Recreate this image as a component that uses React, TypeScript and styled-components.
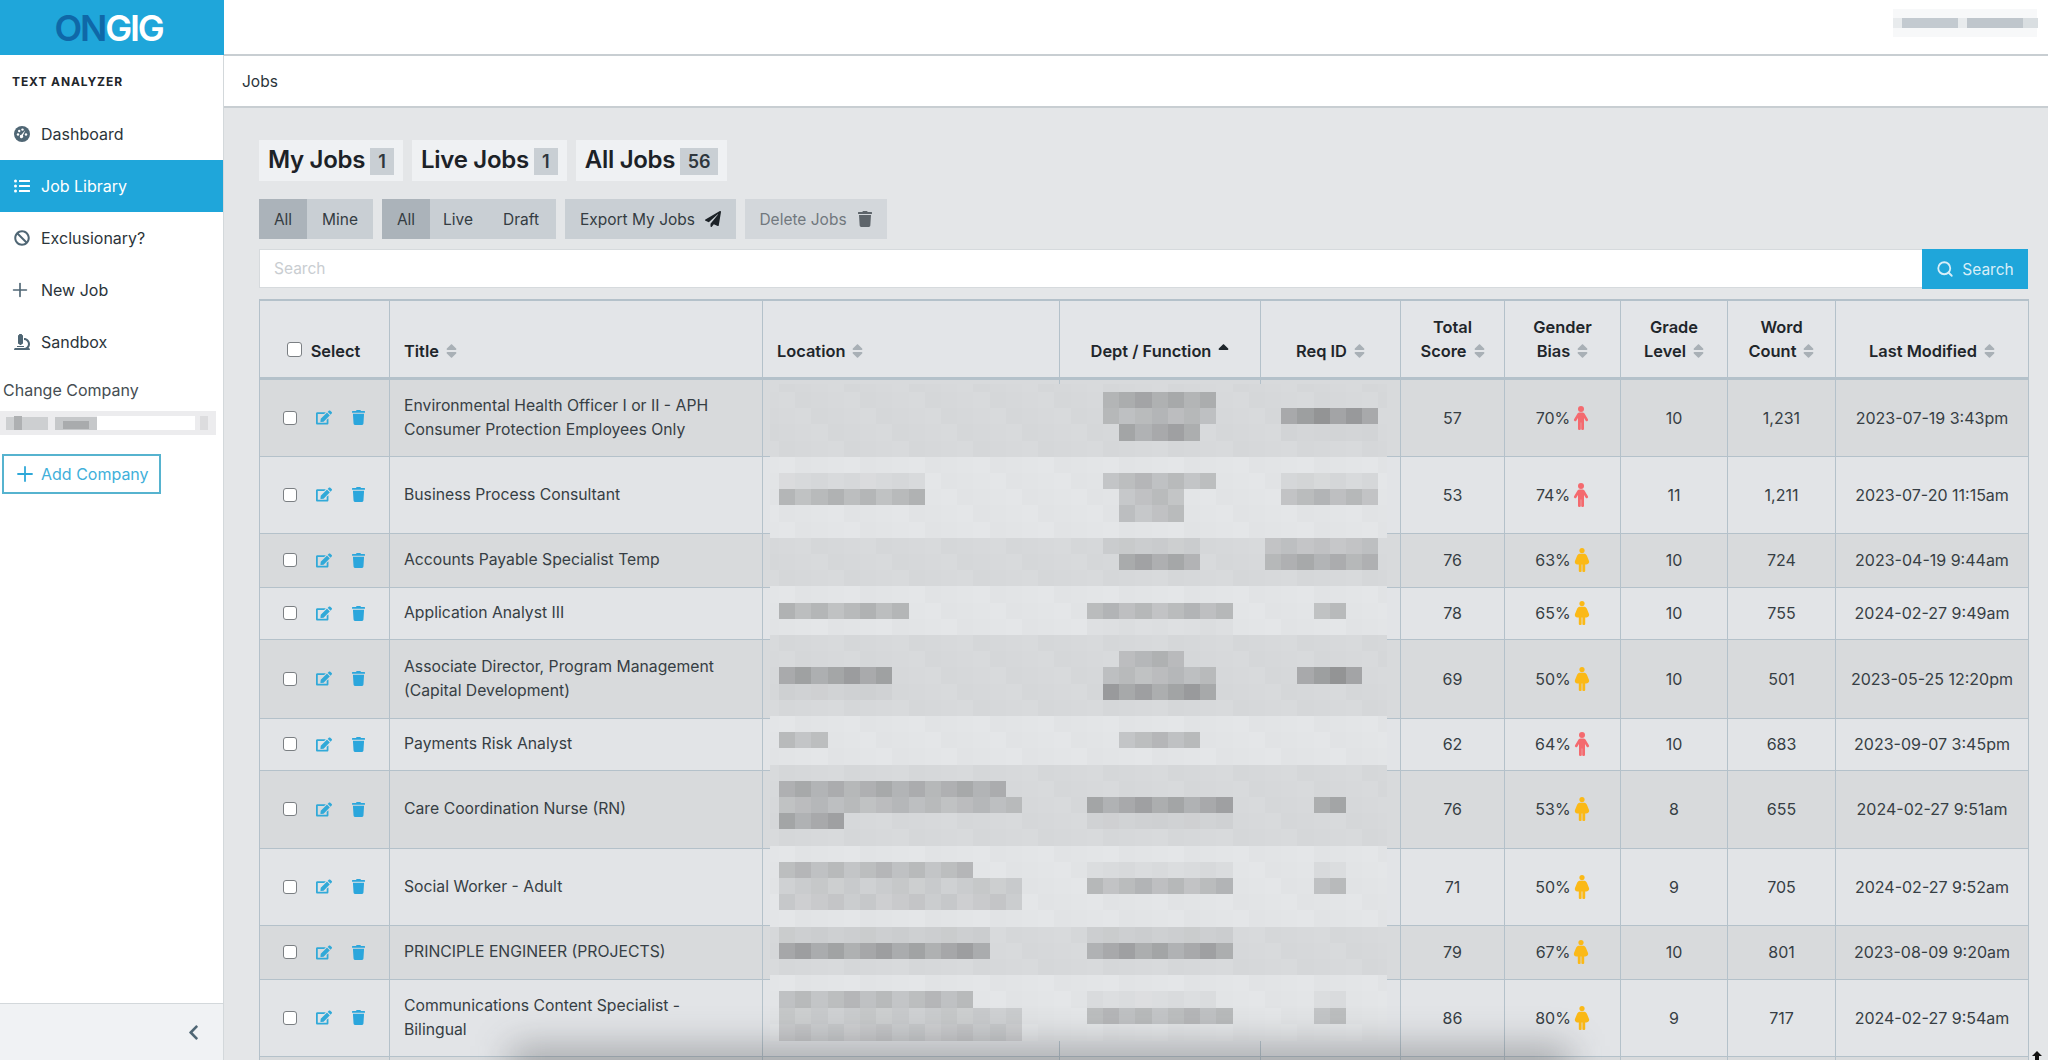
import React from "react";
import styled, { createGlobalStyle } from "styled-components";
import {
  FaBan,
  FaChevronLeft,
  FaEdit,
  FaListUl,
  FaMicroscope,
  FaPaperPlane,
  FaSort,
  FaSortUp,
  FaTrash,
} from "react-icons/fa";
import { Plus, Search } from "lucide-react";

const GlobalStyle = createGlobalStyle`
  html, body {
    margin: 0;
    padding: 0;
    background: #e4e6e8;
  }
  body {
    font-family: Inter, "Noto Sans", "Liberation Sans", sans-serif;
    color: #2f373d;
  }
  * { box-sizing: border-box; }
`;

const Page = styled.div`
  position: relative;
  display: grid;
  grid-template-columns: 224px 1fr;
  width: 2048px;
  height: 1060px;
  overflow: hidden;
`;

const Sidebar = styled.aside`
  display: flex;
  flex-direction: column;
  background: #fff;
  border-right: 1px solid #d3d8db;
  height: 1060px;
`;

const LogoBar = styled.div`
  height: 55px;
  margin-right: -1px;
  background: #1fa6da;
  display: flex;
  align-items: center;
  justify-content: center;
  font-size: 36px;
  font-weight: 600;
  letter-spacing: -2.2px;
  color: #fff;
  padding-right: 7px;
`;

const LogoDark = styled.span`
  color: #0f68a8;
`;

const SideTitle = styled.div`
  height: 53px;
  padding: 0 12px;
  display: flex;
  align-items: center;
  font-size: 12px;
  font-weight: 700;
  letter-spacing: 0.9px;
  color: #1f262b;
`;

const MenuItem = styled.div<{ $active?: boolean }>`
  height: 52px;
  padding-left: 14px;
  display: flex;
  align-items: center;
  gap: 11px;
  font-size: 16px;
  color: ${(p) => (p.$active ? "#fff" : "#2b343a")};
  background: ${(p) => (p.$active ? "#1fa6da" : "transparent")};

  svg {
    width: 16px;
    height: 16px;
    color: ${(p) => (p.$active ? "#fff" : "#4f6674")};
  }
`;

const MenuPlus = styled(Plus)`
  && {
    width: 22px;
    height: 22px;
    margin: 0 -1px 0 -5px;
  }
`;

const CompanyLabel = styled.div`
  padding: 11px 0 0 3px;
  height: 34px;
  font-size: 16px;
  line-height: 22px;
  color: #454d52;
`;

const CompanyBlur = styled.div`
  margin-top: 9px;
  height: 24px;
  width: 216px;

  svg {
    display: block;
  }
`;

const AddCompany = styled.div`
  margin: 19px 0 0 2px;
  width: 159px;
  height: 40px;
  border: 2px solid #56b3cf;
  display: flex;
  align-items: center;
  gap: 7px;
  padding-left: 12px;
  font-size: 16px;
  color: #3fb0da;

  svg {
    width: 24px;
    height: 24px;
    margin: 0 -3px;
    color: #2ea8d8;
  }
`;

const SideFooter = styled.div`
  margin-top: auto;
  height: 57px;
  background: #f0f2f4;
  border-top: 1px solid #d3d8db;
  display: flex;
  align-items: center;
  justify-content: flex-end;
  padding-right: 22px;
  color: #4f6674;

  svg {
    width: 15px;
    height: 17px;
  }
`;

const Main = styled.main`
  display: flex;
  flex-direction: column;
  min-width: 0;
`;

const TopBar = styled.header`
  height: 56px;
  margin-bottom: -2px;
  flex: none;
  background: #fff;
  border-bottom: 2px solid #c8ced2;
  display: flex;
  justify-content: flex-end;
  align-items: flex-start;
  padding: 9px 8px 0 0;

  svg {
    display: block;
  }
`;

const Crumbs = styled.div`
  height: 54px;
  flex: none;
  background: #fff;
  border-top: 2px solid #c8ced2;
  border-bottom: 2px solid #c8ced2;
  padding-left: 18px;
  display: flex;
  align-items: center;
  font-size: 15.5px;
  color: #2b343a;
`;

const Content = styled.div`
  flex: 1;
  padding: 32px 20px 0 35px;
  min-height: 0;
`;

const Tabs = styled.div`
  display: flex;
  gap: 9px;
  height: 41px;
`;

const Tab = styled.div`
  height: 41px;
  padding: 0 9px 2px 9px;
  background: #eff1f3;
  display: flex;
  align-items: center;
  gap: 5px;
  font-size: 24px;
  font-weight: 600;
  letter-spacing: -0.3px;
  color: #1c2227;
`;

const Badge = styled.span<{ $w: number }>`
  width: ${(p) => p.$w}px;
  height: 27px;
  margin-top: 3px;
  background: #c9cfd4;
  display: flex;
  align-items: center;
  justify-content: center;
  font-size: 18px;
  font-weight: 600;
  letter-spacing: 0;
  color: #2f373d;
`;

const Toolbar = styled.div`
  display: flex;
  gap: 9px;
  margin-top: 18px;
  height: 40px;
`;

const Group = styled.div`
  display: flex;
`;

const Btn = styled.div<{ $active?: boolean; $w: number; $off?: boolean }>`
  height: 40px;
  width: ${(p) => p.$w}px;
  display: flex;
  align-items: center;
  justify-content: center;
  gap: 10px;
  font-size: 15.5px;
  background: ${(p) => (p.$active ? "#abb3ba" : p.$off ? "#d3d7db" : "#c9cfd4")};
  color: ${(p) => (p.$off ? "#71787e" : "#343c42")};

  svg {
    width: 16px;
    height: 16px;
    color: ${(p) => (p.$off ? "#5e656b" : "#1c2227")};
  }
`;

const SearchRow = styled.div`
  display: flex;
  margin-top: 10px;
  height: 40px;
`;

const SearchInput = styled.input`
  flex: 1;
  height: 39px;
  border: 1px solid #d6dadd;
  border-right: none;
  background: #fff;
  padding: 0 14px;
  font-family: inherit;
  font-size: 15.5px;
  outline: none;

  &::placeholder {
    color: #c9cdd1;
  }
`;

const SearchBtn = styled.div`
  width: 106px;
  height: 40px;
  background: #1fa6da;
  color: #d8eef8;
  display: flex;
  align-items: center;
  justify-content: center;
  gap: 8px;
  font-size: 15.5px;

  svg {
    width: 18px;
    height: 18px;
  }
`;

const TableWrap = styled.div`
  position: relative;
  margin-top: 10px;
`;

const Table = styled.table`
  width: 1769px;
  table-layout: fixed;
  border-collapse: collapse;
`;

const Th = styled.th<{ $left?: boolean }>`
  height: 78px;
  padding: 0 14px 14px;
  vertical-align: bottom;
  text-align: ${(p) => (p.$left ? "left" : "center")};
  font-size: 16.4px;
  font-weight: 600;
  line-height: 24px;
  color: #1f262b;
  background: #e3e5e8;
  border: 1px solid #b4c1ca;
  border-top-width: 2px;
  border-bottom: 3px solid #b4c1ca;
  white-space: nowrap;
`;

const SortIcon = styled(FaSort)`
  width: 11px;
  height: 18px;
  margin-left: 7px;
  vertical-align: -3px;
  color: #a9b0b6;
`;

const SortUp = styled(FaSortUp)`
  width: 11px;
  height: 18px;
  margin-left: 7px;
  vertical-align: -3px;
  color: #1f262b;
`;

const Row = styled.tr<{ $dark: boolean }>`
  background: ${(p) => (p.$dark ? "#d8dadc" : "#e2e4e7")};
`;

const Td = styled.td<{ $h: number; $left?: boolean }>`
  height: ${(p) => p.$h}px;
  padding: 0 ${(p) => (p.$left ? "14px" : "0")};
  text-align: ${(p) => (p.$left ? "left" : "center")};
  font-size: ${(p) => (p.$left ? "15.75px" : "16px")};
  line-height: 24px;
  color: #363e44;
  border: 1px solid #b4c1ca;
  white-space: pre-line;
`;

const Check = styled.input.attrs({ type: "checkbox" })`
  appearance: none;
  flex: none;
  width: 14px;
  height: 14px;
  margin: 0;
  background: #fff;
  border: 1px solid #7b7f83;
  border-radius: 3px;
`;

const HeadCheck = styled(Check)`
  width: 15px;
  height: 15px;
  position: relative;
  top: -1px;
`;

const Actions = styled.div`
  display: flex;
  align-items: center;
  padding-left: 23px;
`;

const EditIcon = styled(FaEdit)`
  width: 16px;
  height: 15px;
  margin-left: 19px;
  color: #31a9d8;
`;

const TrashIcon = styled(FaTrash)`
  width: 13px;
  height: 15px;
  margin-left: 20px;
  color: #2ba6dc;
`;

const SelectHead = styled.div`
  display: flex;
  align-items: center;
  justify-content: center;
  gap: 9px;
  padding-right: 2px;
`;

const Bias = styled.span`
  display: inline-flex;
  align-items: center;
  justify-content: center;
  gap: 3px;
`;

const PersonIcon = styled.svg<{ $c: string }>`
  width: 16px;
  height: 24px;
  fill: ${(p) => p.$c};

  line {
    stroke: ${(p) => p.$c};
    stroke-width: 2.6;
    stroke-linecap: round;
  }
`;

const MosaicLayer = styled.svg`
  position: absolute;
  left: 511px;
  top: 85px;
  width: 617px;
  height: 658px;
`;

const DockShadow = styled.div`
  position: absolute;
  left: 510px;
  bottom: -26px;
  width: 1060px;
  height: 40px;
  background: rgba(40, 44, 48, 0.32);
  filter: blur(18px);
  pointer-events: none;
`;

const Cursor = styled.svg`
  position: absolute;
  left: 2032px;
  top: 1051px;
  width: 10px;
  height: 9px;
`;

type Job = {
  title: string;
  h: number;
  score: number;
  bias: number;
  red: boolean;
  grade: number;
  words: string;
  date: string;
};

const jobs: Job[] = [
  { title: "Environmental Health Officer I or II - APH\nConsumer Protection Employees Only", h: 78, score: 57, bias: 70, red: true, grade: 10, words: "1,231", date: "2023-07-19 3:43pm" },
  { title: "Business Process Consultant", h: 77, score: 53, bias: 74, red: true, grade: 11, words: "1,211", date: "2023-07-20 11:15am" },
  { title: "Accounts Payable Specialist Temp", h: 54, score: 76, bias: 63, red: false, grade: 10, words: "724", date: "2023-04-19 9:44am" },
  { title: "Application Analyst III", h: 52, score: 78, bias: 65, red: false, grade: 10, words: "755", date: "2024-02-27 9:49am" },
  { title: "Associate Director, Program Management\n(Capital Development)", h: 79, score: 69, bias: 50, red: false, grade: 10, words: "501", date: "2023-05-25 12:20pm" },
  { title: "Payments Risk Analyst", h: 52, score: 62, bias: 64, red: true, grade: 10, words: "683", date: "2023-09-07 3:45pm" },
  { title: "Care Coordination Nurse (RN)", h: 78, score: 76, bias: 53, red: false, grade: 8, words: "655", date: "2024-02-27 9:51am" },
  { title: "Social Worker - Adult", h: 77, score: 71, bias: 50, red: false, grade: 9, words: "705", date: "2024-02-27 9:52am" },
  { title: "PRINCIPLE ENGINEER (PROJECTS)", h: 54, score: 79, bias: 67, red: false, grade: 10, words: "801", date: "2023-08-09 9:20am" },
  { title: "Communications Content Specialist -\nBilingual", h: 77, score: 86, bias: 80, red: false, grade: 9, words: "717", date: "2024-02-27 9:54am" },
];

// redacted columns: [tile row, first col, last col (exclusive), strength]
const bands: [number, number, number, number][] = [
  [0, 20, 27, 0.26], [1, 20, 27, 0.18], [1, 31, 37, 0.34], [2, 21, 26, 0.28], [2, 31, 37, 0.03],
  [5, 0, 9, 0.07], [5, 20, 27, 0.22], [5, 31, 37, 0.08], [6, 0, 9, 0.24], [6, 21, 25, 0.2], [6, 31, 37, 0.23], [7, 21, 25, 0.2],
  [9, 20, 26, 0.08], [9, 30, 37, 0.13], [10, 21, 26, 0.27], [10, 30, 37, 0.24],
  [13, 0, 8, 0.24], [13, 19, 28, 0.23], [13, 33, 35, 0.24], [14, 19, 28, 0.04],
  [16, 21, 25, 0.2], [17, 0, 7, 0.3], [17, 20, 27, 0.17], [17, 32, 36, 0.34], [18, 0, 7, 0.05], [18, 20, 27, 0.31],
  [21, 0, 3, 0.22], [21, 21, 26, 0.22],
  [24, 0, 14, 0.24], [25, 0, 15, 0.17], [25, 19, 28, 0.28], [25, 33, 35, 0.28], [26, 0, 4, 0.28], [26, 19, 28, 0.05],
  [29, 0, 12, 0.22], [29, 19, 28, 0.06], [29, 33, 35, 0.06], [30, 0, 15, 0.14], [30, 19, 28, 0.23], [30, 33, 35, 0.22], [31, 0, 15, 0.15],
  [33, 0, 13, 0.07], [33, 19, 28, 0.07], [34, 0, 13, 0.29], [34, 19, 28, 0.28],
  [37, 0, 12, 0.22], [37, 19, 27, 0.05], [37, 33, 35, 0.05], [38, 0, 15, 0.14], [38, 19, 28, 0.22], [38, 33, 35, 0.22], [39, 0, 15, 0.15],
];

const lightRows = [4, 5, 6, 7, 8, 12, 13, 14, 20, 21, 22, 28, 29, 30, 31, 32, 36, 37, 38, 39];

function Mosaic() {
  const tile = 16.2;
  const rects: React.ReactElement[] = [];
  for (let j = -1; j < 40; j++) {
    const base = lightRows.includes(j) ? [228, 230, 232] : [216, 218, 220];
    const y = j === -1 ? 0 : 8 + j * tile;
    const ht = j === -1 ? 8 : tile;
    for (let i = -1; i < 38; i++) {
      const x = i === -1 ? 0 : 9 + i * tile;
      const w = i === -1 ? 9 : tile;
      const band = bands.find((b) => b[0] === j && i >= b[1] && i < b[2]);
      const noise = 0.82 + (((i * 7 + j * 13) % 5 + 5) % 5) * 0.09;
      const k = band ? 1 - band[3] * noise * 0.8 : 1 - (((i * 3 + j * 5) % 4 + 4) % 4) * 0.004;
      const c = base.map((v) => Math.round(v * k));
      rects.push(
        <rect key={`${i}-${j}`} x={x} y={y} width={w + 0.5} height={ht + 0.5} fill={`rgb(${c[0]},${c[1]},${c[2]})`} />
      );
    }
  }
  return (
    <MosaicLayer viewBox="0 0 617 658" shapeRendering="crispEdges">
      {rects}
    </MosaicLayer>
  );
}

function CompanyMosaic() {
  return (
    <svg width="216" height="24" viewBox="0 0 216 24" shapeRendering="crispEdges">
      <rect width="216" height="24" fill="#ececee" />
      <rect x="97" y="5" width="98" height="14" fill="#fff" />
      <rect x="200" y="5" width="8" height="14" fill="#dcdcde" />
      <rect x="6" y="6" width="42" height="13" fill="#cdcfd1" />
      <rect x="14" y="5" width="8" height="14" fill="#aeb0b2" />
      <rect x="55" y="6" width="42" height="13" fill="#c6c8ca" />
      <rect x="63" y="10" width="26" height="8" fill="#a9abad" />
    </svg>
  );
}

function UserMosaic() {
  return (
    <svg width="150" height="30" viewBox="0 0 150 30" shapeRendering="crispEdges">
      <rect x="3" y="0" width="144" height="28" fill="#f7f8f9" />
      <rect x="3" y="9" width="144" height="10" fill="#e8ebed" />
      <rect x="12" y="9" width="56" height="10" fill="#c3cad0" />
      <rect x="77" y="9" width="56" height="10" fill="#bfc6cc" />
      <rect x="133" y="9" width="15" height="10" fill="#d9dee1" />
    </svg>
  );
}

function GaugeIcon() {
  return (
    <svg viewBox="0 0 16 16">
      <circle cx="8" cy="8" r="8" fill="currentColor" />
      <circle cx="4" cy="8.500" r="1.200" fill="#fff" />
      <circle cx="5.200" cy="5" r="1.200" fill="#fff" />
      <circle cx="8.500" cy="3.600" r="1.200" fill="#fff" />
      <circle cx="12" cy="8.500" r="1.200" fill="#fff" />
      <path d="M11.300 4.200 8.900 9.500a1.700 1.700 0 1 1-1.500-.7z" fill="#fff" />
    </svg>
  );
}

function Person({ red }: { red: boolean }) {
  if (red) {
    return (
      <PersonIcon $c="#f46a6f" viewBox="0 0 16 24">
        <circle cx="8" cy="3" r="3" />
        <rect x="5" y="6.500" width="6" height="10" rx="1.500" />
        <line x1="5.800" y1="8" x2="2.200" y2="14" />
        <line x1="10.200" y1="8" x2="13.800" y2="14" />
        <rect x="5" y="13" width="2.800" height="11" rx="1.200" />
        <rect x="8.200" y="13" width="2.800" height="11" rx="1.200" />
      </PersonIcon>
    );
  }
  return (
    <PersonIcon $c="#fbb917" viewBox="0 0 16 24">
      <circle cx="8" cy="2.600" r="2.600" />
      <path d="M5.500 5.800h5c1 0 2 .9 2.600 2.400l2 5c.4 1.500-.6 3-2.600 3.300H3.500C1.500 16.500.5 14.700.9 13.200l2-5C3.500 6.700 4.500 5.800 5.500 5.800z" />
      <rect x="4.800" y="15" width="2.800" height="9" rx="1" />
      <rect x="8.400" y="15" width="2.800" height="9" rx="1" />
    </PersonIcon>
  );
}

function SortHead({ children }: { children: React.ReactNode }) {
  return (
    <>
      {children}
      <SortIcon />
    </>
  );
}

export default function App() {
  return (
    <>
      <GlobalStyle />
      <Page>
        <Sidebar>
          <LogoBar>
            <LogoDark>ON</LogoDark>GIG
          </LogoBar>
          <SideTitle>TEXT ANALYZER</SideTitle>
          <MenuItem>
            <GaugeIcon />
            Dashboard
          </MenuItem>
          <MenuItem $active>
            <FaListUl />
            Job Library
          </MenuItem>
          <MenuItem>
            <FaBan />
            Exclusionary?
          </MenuItem>
          <MenuItem>
            <MenuPlus strokeWidth={1.8} />
            New Job
          </MenuItem>
          <MenuItem>
            <FaMicroscope />
            Sandbox
          </MenuItem>
          <CompanyLabel>Change Company</CompanyLabel>
          <CompanyBlur>
            <CompanyMosaic />
          </CompanyBlur>
          <AddCompany>
            <Plus strokeWidth={1.8} />
            Add Company
          </AddCompany>
          <SideFooter>
            <FaChevronLeft />
          </SideFooter>
        </Sidebar>
        <Main>
          <TopBar>
            <UserMosaic />
          </TopBar>
          <Crumbs>Jobs</Crumbs>
          <Content>
            <Tabs>
              <Tab>
                My Jobs <Badge $w={24}>1</Badge>
              </Tab>
              <Tab>
                Live Jobs <Badge $w={24}>1</Badge>
              </Tab>
              <Tab>
                All Jobs <Badge $w={38}>56</Badge>
              </Tab>
            </Tabs>
            <Toolbar>
              <Group>
                <Btn $active $w={48}>All</Btn>
                <Btn $w={66}>Mine</Btn>
              </Group>
              <Group>
                <Btn $active $w={48}>All</Btn>
                <Btn $w={56}>Live</Btn>
                <Btn $w={70}>Draft</Btn>
              </Group>
              <Btn $w={171}>
                Export My Jobs <FaPaperPlane />
              </Btn>
              <Btn $off $w={142}>
                Delete Jobs <FaTrash />
              </Btn>
            </Toolbar>
            <SearchRow>
              <SearchInput placeholder="Search" />
              <SearchBtn>
                <Search strokeWidth={2.4} />
                Search
              </SearchBtn>
            </SearchRow>
            <TableWrap>
              <Table>
                <colgroup>
                  {[130, 373, 297, 201, 140, 104, 116, 107, 108, 193].map((w, i) => (
                    <col key={i} width={w} />
                  ))}
                </colgroup>
                <thead>
                  <tr>
                    <Th>
                      <SelectHead>
                        <HeadCheck />
                        Select
                      </SelectHead>
                    </Th>
                    <Th $left><SortHead>Title</SortHead></Th>
                    <Th $left><SortHead>Location</SortHead></Th>
                    <Th>
                      Dept / Function
                      <SortUp />
                    </Th>
                    <Th><SortHead>Req ID</SortHead></Th>
                    <Th>Total<br /><SortHead>Score</SortHead></Th>
                    <Th>Gender<br /><SortHead>Bias</SortHead></Th>
                    <Th>Grade<br /><SortHead>Level</SortHead></Th>
                    <Th>Word<br /><SortHead>Count</SortHead></Th>
                    <Th><SortHead>Last Modified</SortHead></Th>
                  </tr>
                </thead>
                <tbody>
                  {jobs.map((job, idx) => (
                    <Row key={job.title} $dark={idx % 2 === 0}>
                      <Td $h={job.h}>
                        <Actions>
                          <Check />
                          <EditIcon />
                          <TrashIcon />
                        </Actions>
                      </Td>
                      <Td $h={job.h} $left>{job.title}</Td>
                      <Td $h={job.h} />
                      <Td $h={job.h} />
                      <Td $h={job.h} />
                      <Td $h={job.h}>{job.score}</Td>
                      <Td $h={job.h}>
                        <Bias>
                          {job.bias}%
                          <Person red={job.red} />
                        </Bias>
                      </Td>
                      <Td $h={job.h}>{job.grade}</Td>
                      <Td $h={job.h}>{job.words}</Td>
                      <Td $h={job.h}>{job.date}</Td>
                    </Row>
                  ))}
                  <Row $dark>
                    {Array.from({ length: 10 }).map((_, i) => (
                      <Td key={i} $h={53} />
                    ))}
                  </Row>
                </tbody>
              </Table>
              <Mosaic />
            </TableWrap>
          </Content>
        </Main>
        <DockShadow />
        <Cursor viewBox="0 0 10 9">
          <polygon points="5,0 10,5 7,5 7,9 3,9 3,5 0,5" fill="#111" />
        </Cursor>
      </Page>
    </>
  );
}
